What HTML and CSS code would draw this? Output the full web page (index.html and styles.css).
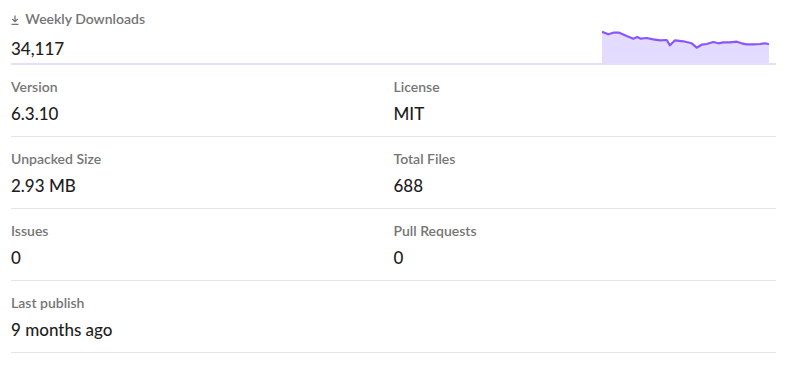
FILE: index.html
```html
<!DOCTYPE html>
<html lang="en">
<head>
    <meta charset="UTF-8">
    <meta name="viewport" content="width=device-width, initial-scale=1.0">
    <title>Package stats</title>
    <link rel="stylesheet" href="styles.css">
</head>
<body>
    <div class="sidebar">
        <div class="downloads">
            <div class="downloads-text">
                <h3 class="label">
                    <svg class="dl-icon" viewBox="0 0 8 10" width="8" height="10">
                        <path d="M4 0.5v6M1.3 4L4 6.7 6.7 4M0.5 9.3h7" fill="none" stroke="#757575" stroke-width="1.3"/>
                    </svg>
                    Weekly Downloads
                </h3>
                <p class="value">34,117</p>
            </div>
            <svg class="chart" viewBox="0 0 168 34" width="168" height="34" preserveAspectRatio="none">
                <path fill="#e4dcff" d="M0 2.7 L6.3 5.3 L11.3 3.7 L17.3 3.7 L24.7 7 L31.3 9.7 L35.3 8 L38.7 9.7 L44.7 9 L51.3 10.3 L58 11.3 L64.7 11 L68 16.3 L73 11.3 L81.3 12.3 L89.7 14.3 L94.7 18.7 L99.7 15.7 L104.7 15 L111.3 13 L116.3 14.3 L121.3 13.3 L128 13.3 L134.7 12.7 L139.7 14.3 L144.7 15.3 L151.3 15.3 L158 15 L163 14.3 L167 15.3 L167 34 L0 34 Z"/>
                <path fill="none" stroke="#8956ff" stroke-width="2.2" stroke-linejoin="round" d="M0 2.7 L6.3 5.3 L11.3 3.7 L17.3 3.7 L24.7 7 L31.3 9.7 L35.3 8 L38.7 9.7 L44.7 9 L51.3 10.3 L58 11.3 L64.7 11 L68 16.3 L73 11.3 L81.3 12.3 L89.7 14.3 L94.7 18.7 L99.7 15.7 L104.7 15 L111.3 13 L116.3 14.3 L121.3 13.3 L128 13.3 L134.7 12.7 L139.7 14.3 L144.7 15.3 L151.3 15.3 L158 15 L163 14.3 L167 15.3"/>
            </svg>
        </div>
        <div class="stat-row">
            <div class="stat">
                <h3 class="label">Version</h3>
                <p class="value">6.3.10</p>
            </div>
            <div class="stat">
                <h3 class="label">License</h3>
                <p class="value">MIT</p>
            </div>
        </div>
        <div class="stat-row">
            <div class="stat">
                <h3 class="label">Unpacked Size</h3>
                <p class="value">2.93 MB</p>
            </div>
            <div class="stat">
                <h3 class="label">Total Files</h3>
                <p class="value">688</p>
            </div>
        </div>
        <div class="stat-row">
            <div class="stat">
                <h3 class="label">Issues</h3>
                <p class="value">0</p>
            </div>
            <div class="stat">
                <h3 class="label">Pull Requests</h3>
                <p class="value">0</p>
            </div>
        </div>
        <div class="stat-row">
            <div class="stat">
                <h3 class="label">Last publish</h3>
                <p class="value">9 months ago</p>
            </div>
        </div>
    </div>
</body>
</html>
```

FILE: styles.css
```css
body {
    font-family: Lato, "Open Sans", sans-serif;
    margin: 0;
    padding: 0 24px 0 11px;
    background-color: #ffffff;
    color: #1e1e1e;
}
.sidebar {
    width: 765px;
}
.downloads {
    display: flex;
    align-items: flex-end;
    justify-content: space-between;
    border-bottom: 2px solid #e6dffc;
    padding-right: 6px;
}
.downloads-text {
    padding-top: 9px;
}
.label {
    font-size: 14px;
    font-weight: 600;
    color: #757575;
    line-height: 20px;
    margin: 0;
}
.dl-icon {
    margin-right: 3px;
    vertical-align: -1px;
}
.value {
    font-size: 17px;
    font-weight: 500;
    color: #1e1e1e;
    line-height: 24px;
    margin: 0;
}
.downloads .value {
    margin-top: 8px;
    padding-bottom: 2px;
}
.chart {
    display: block;
}
.stat-row {
    display: grid;
    grid-template-columns: 1fr 1fr;
    border-bottom: 1px solid #e5e5e5;
    padding: 12px 0 10px;
}
.stat .value {
    margin-top: 5px;
}
```
